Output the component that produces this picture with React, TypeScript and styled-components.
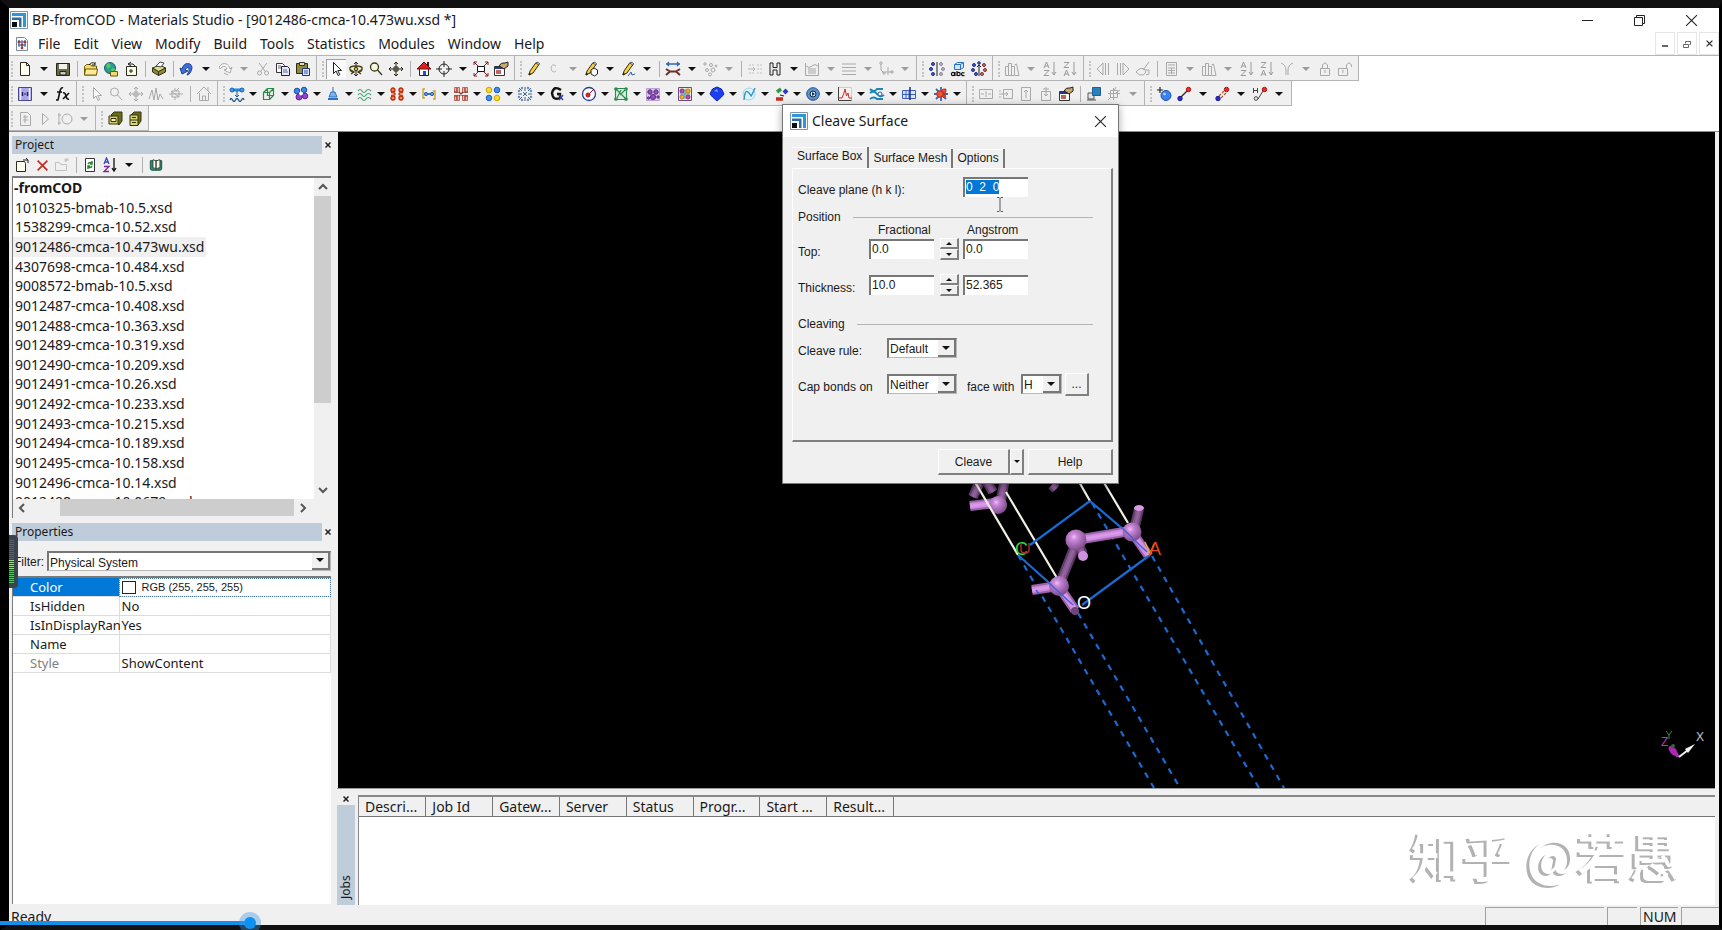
import React, { useEffect, useRef } from "react";
import styled, { createGlobalStyle, css } from "styled-components";

const uiFont = `"Noto Sans", "Open Sans", sans-serif`;
const dialogFont = `"Liberation Sans", Arial, sans-serif`;
const face = "#f0f0f0";
const caption = "#bfcddb";

const GlobalStyle = createGlobalStyle`
  * { box-sizing: border-box; }
  html, body { margin: 0; height: 100%; background: #000; }
  body { overflow: hidden; font: 14px/20px ${uiFont}; color: #1a1a1a; }
  button, input, select { font: inherit; color: inherit; margin: 0; padding: 0; border: 0; background: none; border-radius: 0; }
  ul { list-style: none; margin: 0; padding: 0; }
  svg { display: block; flex: none; }
`;

/* ---------- icons ---------- */

type Shape = [d: string, stroke?: string, fill?: string, width?: number];

const dot = (x: number, y: number, r: number) =>
  `M${x - r} ${y}a${r} ${r} 0 1 0 ${2 * r} 0a${r} ${r} 0 1 0 ${-2 * r} 0z`;

const GREY = "#a9a9a9";
const POINTER = "M5.5 1.5v11l2.600-2.500 2 4.500 1.700-.8-2-4.200h3.700z";
const LENS = dot(6.5, 6, 4) + "M9.500 9l4.500 5";
const MOVE = "M8 1v14M1 8h14M6 3l2-2 2 2M6 13l2 2 2-2M3 6l-2 2 2 2M13 6l2 2-2 2M6 6h4v4h-4z";
const PENCIL: Shape[] = [
  ["M3 14l1-4 6-8.500 3 2-6 8.500z", "#3b2c10", "#f3cf45"],
  ["M10 2l1-1 2.500 1.500-.7 1.500z", "#555", "#eee"],
  ["M3 14l.4-2 1.200 1z", "#222", "#222"],
];

const icons: Record<string, Shape[]> = {
  newDoc: [["M3.500 1.500h6l3 3v10h-9zM9.500 1.500v3h3", "#2b2b20", "#fffff2"]],
  save: [
    ["M1.500 2.500h13v12h-13z", "#25251a", "#6b6b45"],
    ["M4 3h8v5h-8z", "none", "#f2f2ee"],
    ["M5 10.500h6v3.500h-6z", "#222", "#c8c8c0"],
  ],
  openFolder: [
    ["M1.500 5.500l2-2h4l1 1.500h5v9h-12z", "#6a5a10", "#f4dc6c"],
    ["M1.500 14l1-6h12l-1 6z", "#6a5a10", "#ffec94"],
    ["M6 4q3-4 6-1M12 1v3h-3", "#222"],
  ],
  globe: [
    [dot(7, 7, 5.5), "#15606a", "#2a9c90"],
    ["M3 4l3-2 2 3-3 3zM8 8l3-1 1 2-3 2z", "none", "#56cc5c"],
    ["M7.500 10.500h7v4.500h-7z", "#6a5a10", "#f4dc6c"],
  ],
  importDoc: [
    ["M3.500 5.500h10v9h-10z", "#2b2b20", "#fbfbe2"],
    ["M5 3h5l3 3M8 1l-3 2 3 2M8 8v4M6 10h4", "#222"],
  ],
  print: [
    ["M1.500 7l7-3 6 3-7 4z", "#333310", "#dede88"],
    ["M1.500 7v4l6 3.500v-4zM14.500 7v4l-7 3.500v-4z", "#333310", "#8a8a3a"],
    ["M5 5l4-4 4 1-3 4z", "#444", "#fff"],
  ],
  undo: [["M3 8q2-7 8-5 4 3 0 9-1 2-3 2 3-4 2-7-2-2-4 2l3 1-6 3-2-6z", "#1d3f96", "#3f6fd8"]],
  redo: [["M13 8q-2-7-8-5-4 2-2 5l2-2q4-2 5 2l-3 1 6 3 2-6zM7 12l4 2", GREY, "#fafafa"]],
  cut: [["M4 2l6 8M12 2l-6 8" + dot(4.5, 12, 2) + dot(11.5, 12, 2), GREY]],
  copy: [
    ["M1.500 2.500h6l2 2v7h-8z", "#333", "#fff"],
    ["M6.500 5.500h6l2 2v7h-8z", "#223", "#e7eaff"],
    ["M8 9h4M8 11h5M3 5h3M3 7h3", "#668"],
  ],
  paste: [
    ["M1.500 2.500h11v10h-11z", "#2d2a10", "#8d8a42"],
    ["M4.500 1.500h5v3h-5z", "#333", "#e8e4a0"],
    ["M7.500 7.500h7v7h-7z", "#1e3584", "#dfe6ff"],
    ["M9 10h4M9 12h4", "#3452aa"],
  ],
  pointer: [[POINTER, "#222", "#fff"]],
  pointerOff: [[POINTER, GREY, "#fafafa"]],
  rotate: [
    ["M8 1v14M6 3l2-2 2 2M6 13l2 2 2-2", "#222"],
    ["M2 8q-1-3 6-3t6 3q0 2-3 3M2 8q0 2 3 3M3 9l3 2-3 2M13 9l-3 2 3 2", "#4a4410", "none", 1.5],
    [dot(8, 8, 1.8), "#333010", "#c9b934"],
  ],
  lens: [[LENS, "#3a3a1c", "#f7f7df", 1.3]],
  lensOff: [[LENS, GREY]],
  move: [[MOVE, "#26260f"]],
  moveOff: [[MOVE, GREY]],
  home: [
    ["M3.500 7.500h9v7h-9z", "#222", "#fff"],
    ["M1 8l7-7 7 7z", "#6d0a0a", "#e02020"],
    ["M7 10h3v4h-3z", "none", "#1f55c0"],
    ["M12 1v4", "#222", "none", 2],
  ],
  homeOff: [["M1 8l7-7 7 7M3.500 7v7.500h9V7M6.500 14v-4h3v4M12 1v4", GREY]],
  target: [[dot(8, 8, 5) + "M8 0v6M8 10v6M0 8h6M10 8h6", "#222"]],
  fit: [
    ["M1 4v-3h3M12 1h3v3M15 12v3h-3M4 15h-3v-3M1 1l4 4M15 1l-4 4M15 15l-4-4M1 15l4-4", "#7e1c1c"],
    ["M4.500 5.500h7v5h-7z", "#111", "#fff"],
  ],
  props: [
    ["M1.500 5.500h10v9h-10z", "#333", "#fff"],
    ["M2 6h9v2h-9z", "none", "#243c8e"],
    ["M3 10h5M3 12h5", "#a33", "none", 1.5],
    ["M6 5q2-4 6-3l3-1v4l-4 3-3-2z", "#222", "#c9a96a"],
  ],
  pencil: PENCIL,
  letterC: [["M10 5q-4-3-5 2 1 6 5 3", "#b5b5b5"]],
  pencilRing: [...PENCIL, ["M8 9l3-2 3.500 2v4l-3 2-3.500-2z", "#222", "#fff"]],
  pencilWave: [...PENCIL, ["M8 15l3-4 1 3 3-1", "#2a61b5"]],
  measure: [
    ["M1 3h14M4 1l-2 2 2 2M12 1l2 2-2 2", "#2867b8", "none", 1.3],
    ["M1 8l4 2.500h6l4-2.500M1 14l4-3.500M15 14l-4-3.500", "#6b3029", "none", 2],
  ],
  cluster: [["M1 3h4M3 1v4" + dot(9, 4, 1.5) + dot(5, 9, 1.5) + dot(11, 9, 2) + dot(8, 13.5, 1.5) + dot(14, 5, 1), GREY]],
  alignDots: [
    ["M1 8h7M6 6l2 2-2 2", "#b4b4b4"],
    ["M2 4h2M5 4h2M2 12h2M5 12h2M11 3v2M11 7v2M11 11v2M14 3v2M14 7v2M14 11v2", "#c2c2c2"],
  ],
  hydrogen: [["M3 2h3v4.500h4v-4.500h3v12h-3v-5h-4v5h-3z", "#222", "#e9e9e9"]],
  chartOff: [["M1.500 2v12.500h13V2M2 5q3 3 6 0t6 0M4 8h8M4 10h8M4 12h8", GREY]],
  linesOff: [["M1 3h14M1 6.500h14M1 10h14M1 13.500h14", GREY]],
  nodesOff: [["M3 3v6l3 3M10 6v8M7 11h8" + dot(3, 2, 1.2) + dot(6, 12, 1.2) + dot(14, 11, 1.2), GREY]],
  mirrorA: [
    ["M8 1v14", "#222"],
    [dot(4, 3, 1.5) + dot(2, 8, 1.5) + dot(4, 13, 1.5), "#25308a", "#4656c8"],
    [dot(12, 3, 1.5) + dot(14, 8, 1.5) + dot(12, 13, 1.5), "#8a8aa0", "#b4b4c8"],
  ],
  labelCube: [
    ["M4.500 3.500h6v5h-6zM7.500 1.500h6v5l-3 2M4.500 3.500l3-2M10.500 3.500l3-2", "#2a72bf", "#cfe5fb"],
    [dot(3, 13, 1.6) + "M5 11v4M7 10v5" + dot(8.6, 13, 1.6) + "M14.500 12q-3-1-3 1t3 1.500", "#111", "none", 1.2],
  ],
  mirrorB: [
    ["M8 4v11M6 6l2-2 2 2", "#222"],
    [dot(3, 4, 1.5) + dot(2, 9, 1.5) + dot(5, 13, 1.5) + dot(8, 2, 1.3), "#25308a", "#4656c8"],
    [dot(13, 4, 1.5) + dot(14, 9, 1.5) + dot(11, 13, 1.5), "#803030", "#c07080"],
  ],
  books: [["M1.500 5.500h3v9h-3zM4.500 2.500h3v12h-3zM7.500 5.500h3v9h-3zM10.500 4l2-1 2.500 11.500h-4", GREY]],
  sortAZ: [["M2 7l2.500-6 2.500 6M3 5h3M2 9.500h5l-5 5h5M12 1v13M10 11l2 3 2-3", "#9a9a9a"]],
  sortZA: [["M2 1.500h5l-5 5h5M2 15l2.500-6 2.500 6M3 13h3M12 1v13M10 11l2 3 2-3", "#9a9a9a"]],
  stepBack: [["M8 2l-6 6 6 6zM10.500 2v12M13.500 2v12", GREY]],
  stepNext: [["M8 2l6 6-6 6zM5.500 2v12M2.500 2v12", GREY]],
  brush: [["M14 1l-6 8M1 11q4-5 8-3 4 3-1 6-4 1-7-3zM10 9h4v4l-3 1", GREY]],
  calc: [["M3.500 1.500h10v13h-10zM5 4h7M5 7h7M5 9.500h7M5 12h7M8.500 7v6", GREY]],
  branch: [["M2 2q5 2 5 7v5M14 2q-5 2-5 7v5", GREY]],
  lock: [["M3.500 7.500h9v7h-9zM5.500 7v-3q2.500-4 5 0v3M8 9v3", GREY]],
  unlock: [["M1.500 7.500h9v7h-9zM9.500 7v-3q2.500-4 5 0v2M6 9v3", GREY]],

  film: [
    ["M1.500 1.500h13v13h-13z", "#4a4790", "#a9a4ea"],
    ["M3.500 2v12M12.500 2v12", "#f0eeff", "none", 1.5],
    ["M5.500 6v4M10.500 6v4", "#27246a", "none", 1.5],
    ["M7 8h2", "#27246a"],
  ],
  fx: [["M8 2q-2-1-3 3l-2 9-2 0M2 6h5M8 7q2-1 3 3t3 3M14 7l-6 6", "#111", "none", 1.6]],
  peaks: [["M1 13l3-9 2 10 2-12 2 12 2-6 3 5", GREY]],
  slice: [["M1 8h14M4 5h7v6h-7zM7 2v3M11 2l-3 3M7 11v3M3 5l8 6", GREY]],
  flask: [
    ["M3 4h10", "#2483d8", "none", 3],
    [dot(3, 4, 2) + dot(13, 4, 2), "#1a5fae", "#3ba0ef"],
    ["M8 5v6M6 9l2 2 2-2", "#205a86"],
    ["M1 14q1-3 2.500 0t3 0 3 0 3 0 2.500 0", "#205a86", "none", 1.3],
  ],
  greenCube: [["M2.500 6.500h6v7h-6zM6.500 2.500h6v7l-4 4M2.500 6.500l4-4M8.500 6.500l4-4M6.500 2.500v7h6", "#2b8a47", "none", 1.2]],
  blobs: [
    [dot(4, 5, 2.8) + dot(11, 4, 2.8), "#1a4fae", "#3b86e0"],
    [dot(6, 11, 3) + dot(12, 10, 2.8), "#60209a", "#9146c8"],
    [dot(8, 7.5, 1.5), "#fff", "#fff"],
  ],
  beaker: [["M8 1v5M6 6h4l2 5h-8z", "#2f6fc0", "#7db4ee"], ["M3 13h10", "#2f6fc0", "none", 2]],
  waves: [["M1 5q2-3 4 0t4 0 5 0M1 9q2-3 4 0t4 0 5 0M1 13q2-3 4 0t4 0 5 0", "#3f9f72", "none", 1.2]],
  redRings: [
    [dot(4, 4, 2) + dot(12, 4, 2) + dot(4, 12, 2) + dot(12, 12, 2), "#b52a12", "#f58a3a", 1.3],
    ["M2 6.500q4 0 4 1.500t-4 1.500M14 6.500q-4 0-4 1.500t4 1.500", "#c83a18", "none", 1.5],
  ],
  link: [
    ["M4 3h-2v9h2M12 5h2v8h-2", "#c9a22a", "none", 1.4],
    ["M4 8h8", "#3577c8", "none", 2],
    [dot(5, 8, 1.6) + dot(11, 8, 1.6), "#2356a0", "#6aa6ee"],
  ],
  redGrid: [
    ["M1.500 1.500h5v5h-5zM9.500 1.500h5v5h-5zM1.500 9.500h5v5h-5zM9.500 9.500h5v5h-5z", "#b86a5c", "#f0b8aa"],
    ["M4 2v4h-3M12 2v4h3M4 14v-4h-3M12 14v-4h3M6 6l4 4M10 6l-4 4", "#8a3226", "none", 1.2],
  ],
  fourDots: [
    [dot(4, 4, 2.8) + dot(12, 12, 2.8), "#c8a400", "#ffd92a"],
    [dot(12, 4, 2.8) + dot(4, 12, 2.8), "#1d5fc0", "#3f8ff0"],
  ],
  lattice: [
    ["M2 2l3 3M14 2l-3 3M2 14l3-3M14 14l-3-3M8 1v4M8 11v4M1 8h4M11 8h4M6 6l4 4M10 6l-4 4", "#3a5e88"],
    [dot(2, 5, 0.8) + dot(5, 2, 0.8) + dot(11, 2, 0.8) + dot(14, 5, 0.8) + dot(2, 11, 0.8) + dot(5, 14, 0.8) + dot(11, 14, 0.8) + dot(14, 11, 0.8), "#4f86bb", "#4f86bb"],
  ],
  gulp: [["M12 4q-7-5-9 3 1 8 8 5v-4h-3", "#141414", "none", 2.4], ["M10 9l4 5M14 9l-4 5", "#3c3caa", "none", 1.4]],
  orbit: [
    [dot(8, 8, 6.5), "#2a3d9c", "#fdfdff", 1.3],
    [dot(7, 9, 2), "#a51616", "#d42a2a"],
    ["M8 8l4-4", "#a51616"],
  ],
  greenNet: [["M2.500 2.500h11v11h-11zM3 3l10 10M8 4l-4 8M12 4l-5 5" + dot(3, 3, 1.3) + dot(13, 3, 1.3) + dot(3, 13, 1.3) + dot(13, 13, 1.3), "#2d8a4e", "#d8f0de", 1.1]],
  purpleMix: [
    ["M1.500 2.500h13v12h-13z", "#b9a2cc", "#dcc8ea"],
    [dot(5, 6, 2.2) + dot(11, 6, 2.2) + dot(8, 11, 2.6) + dot(3.5, 12, 1.2) + dot(13, 11, 1.2), "#5d2a88", "#8f50bb"],
  ],
  multiMix: [
    ["M1.500 1.500h13v13h-13z", "#6a4a8c", "#f2e6c4"],
    [dot(5, 5, 2) + dot(11, 11, 2), "#8a2a8a", "#b050b4"],
    [dot(11, 5, 2) + dot(5, 11, 2), "#b07a10", "#eeb53a"],
    ["M3 8h10M8 3v10", "#3f8ac0"],
  ],
  blueGem: [["M8 1l4.500 2 2.500 5-2.500 3-4.500 4-4.500-4-2.500-3 2.500-5z", "#0b1fae", "#1c40ee"], ["M5 5l3-2 1 3z", "none", "#7a9cff"]],
  cyanN: [[dot(8, 8, 6), "#9ed4e8", "#e2f5fb"], ["M3 14q1-11 4-8t3 4 4-8", "#2e93c8", "none", 1.4]],
  pills: [
    ["M4 6l4-3", "#2c9a3c", "none", 3.5],
    ["M11 7l3-3", "#2a3ac8", "none", 4],
    ["M3 13h7", "#c82a1e", "none", 3.5],
    ["M7 9l4 1", "#222", "none", 1.2],
  ],
  disc: [[dot(8, 8, 6.3), "#1f4f8c", "#5d93cf"], [dot(8, 8, 3), "#123", "#d8e8fb"], ["M7 6l3 2-3 2z", "none", "#15335c"]],
  spectrum: [
    ["M1.500 1.500h13v13h-13z", "#dcc6c6", "#f8efef"],
    ["M1.500 1v13.500h13", "#444"],
    ["M2 12h3l2-5 1-4 1.500 7 1.500-3 1 5h3", "#cf2a2a"],
  ],
  cyanWaves: [["M1 3q4 4 7 0h6M1 7q4-3 7 1t7 1M1 13q4-3 7 0h6", "#1f86b8", "none", 2], [dot(11, 8, 2), "#1f5f98", "#fff"]],
  blueTable: [["M1.500 4.500h13v8h-13zM2 8.500h12M8 4v9M5 4v9", "#3a5fc0", "#dce8ff"], ["M9 1v13", "#1b2f80", "none", 1.5]],
  burst: [
    ["M8 1v14M1 8h14M3 3l10 10M13 3l-10 10", "#3768b8", "none", 1.8],
    [dot(7, 8, 3.3) + dot(11, 5, 2) + dot(11, 10, 1.5), "#c02a1a", "#ee5436"],
  ],
  cellLeft: [["M1.500 3.500h13v9h-13zM8 5v6M10 8h3M6 8h-3", GREY]],
  cellRight: [["M5.500 3.500h9v9h-9zM1 5h2M1 8h9M1 11h2M8 6l2 2-2 2", GREY]],
  cellUp: [["M3.500 1.500h9v13h-9zM8 4v8M6 6l2-2 2 2", GREY]],
  cellDown: [["M3.500 5.500h9v9h-9zM8 1v9M6 8l2 2 2-2M5 3h6", GREY]],
  panels: [["M2 7h6v6h-6z", "#555", "#e6e6e6"], ["M6.500 1.500h8v8h-8z", "#1e5f8e", "#2a80b8"], ["M1 14h9", "#555"]],
  cropOff: [["M4.500 4.500h7v7h-7zM2 7.500h12M7.500 2v12M10 1l-2 4M14 4l-4 3M2 14l3-3", GREY]],
  addAtom: [["M1 4h6M4 1v6", "#222", "none", 1.2], [dot(10, 9.5, 5), "#1d4fb4", "#3b82ee"], [dot(8.5, 8, 1.3), "none", "#bcd8ff"]],
  bondA: [["M4 12l8-8", "#333", "none", 1.4], [dot(4, 12.5, 2.2), "#17178a", "#2a2ad0"], [dot(12.5, 3.5, 2.2), "#a01010", "#e83030"]],
  bondB: [["M5 10l2-2M8 7l2-2M7 12l2-2M10 9l2-2", "#b06030", "none", 1.2], [dot(4, 12.5, 2.2), "#17178a", "#2a2ad0"], [dot(12.5, 3.5, 2.2), "#a01010", "#e83030"]],
  bondH: [["M1.500 2v5M5.500 2v5M2 4.500h3" + dot(4, 12.5, 1.8) + "M6 13l5-8", "#444"], [dot(12.5, 3.5, 2.2), "#a01010", "#e83030"]],

  report: [["M3.500 1.500h7l3 3v10h-10zM6 6h5M6 9h5M8 4v8", GREY]],
  play: [["M5.500 2.500l6 5.500-6 5.500z", GREY]],
  cycle: [["M2 2v12M1 4h3M1 12h3" + dot(10, 8, 5), GREY]],
  serverA: [
    ["M4 4l3-3h8v9l-3 4z", "#33330a", "#6b6b22"],
    ["M2 5h9v8h-9z", "#33330a", "#cfcf70"],
    ["M4 7.500h5v3h-5z", "#33330a", "#f4f4b8"],
  ],
  serverB: [
    ["M4 4l3-3h7v9l-3 4z", "#33330a", "#6b6b22"],
    ["M3 4h8v10.500h-8zM3 9h8", "#33330a", "#d8d878"],
    ["M5 6.500h4M5 11.500h4", "#33330a"],
  ],
  addDoc: [["M2.500 4.500h8l1 2v8h-9z", "#2b2b20", "#fffff2"], ["M9 3h5v3M12 1l2 2", "#222"]],
  remove: [["M2 2l12 12M14 2l-12 12", "#c32a22", "none", 2]],
  folderOff: [["M1.500 5.500h4l1 2h6v6h-11zM12 1v4M10 3h5M14 1l-3 4", "#c0c0c0"]],
  refresh: [["M3.500 1.500h9v13h-9z", "#333", "#fff"], ["M6 7q2-3 4 0M10 4v3h-2M10 9q-2 3-4 0M6 12v-3h2", "#1f8a2a", "none", 1.5]],
  sort: [["M2 7l2.500-6 2.500 6M3 5h3", "#3345c8", "none", 1.3], ["M2 9.500h5l-5 5h5", "#7a2890", "none", 1.3], ["M12 1v13M10 11l2 3 2-3", "#111", "none", 1.3]],
  book: [
    ["M1.500 3v9q0 2 2 2h9q2 0 2-2v-9z", "#0d5040", "#2f8a68"],
    ["M4.500 2q1.500 0 3.500 2v9q-2-2-3.500-2zM12.500 2q-2 0-4.500 2v9q2-2 4.500-2z", "#333", "#fffff0"],
  ],
  docChart: [
    ["M2.500 1.500h8l3 3v10h-11z", "#7a8aa0", "#fff"],
    ["M4 6h8M4 9h8M5 4v7M8 4v9M11 4v7", "#2c58a8"],
    [dot(5, 6, 1) + dot(8, 9, 1) + dot(11, 6, 1) + dot(8, 12, 1), "#b03020", "#b03020"],
  ],
};

const Icon = ({ name, size = 16 }: { name: string; size?: number }) => (
  <svg width={size} height={size} viewBox="0 0 16 16" aria-hidden="true">
    {icons[name].map(([d, stroke = "none", fill = "none", width = 1], i) => (
      <path key={i} d={d} stroke={stroke} fill={fill} strokeWidth={width} />
    ))}
  </svg>
);

const Triangle = ({ color = "#111", width = 8 }: { color?: string; width?: number }) => (
  <svg width={width} height={width / 2} viewBox="0 0 8 4" aria-hidden="true">
    <path d="M0 0h8l-4 4z" fill={color} />
  </svg>
);

const Logo = () => (
  <svg width="18" height="18" viewBox="0 0 18 18" aria-hidden="true">
    <path d="M.5.500h17v17h-17z" fill="#fff" stroke="#8095a8" />
    <path d="M2 2h14v14h-3v-11h-11z" fill="#2f97d8" />
    <path d="M2 6.500h9.500v9.500h-2.500v-7h-7z" fill="#2c6f9c" />
    <path d="M2 11h5v5h-5z" fill="#0c0c0c" />
  </svg>
);

/* ---------- frame ---------- */

const Screen = styled.div`
  position: relative;
  height: 100vh;
  display: flex;
  flex-direction: column;
  border: solid #111;
  border-width: 8px 3px 5px 9px;
  border-left-color: #000;
  border-right-color: #000;
  background: ${face};
`;
const TitleBar = styled.header`
  display: flex;
  align-items: center;
  gap: 4px;
  height: 24px;
  padding: 0 4px 0 1px;
  background: #fff;
  flex: none;
`;
const WindowTitle = styled.h1`
  margin: 0;
  flex: 1;
  font-size: 14px;
  font-weight: 400;
  line-height: 22px;
`;
const WindowButton = styled.button`
  width: 48px;
  height: 22px;
  display: grid;
  place-items: center;
`;
const MenuBar = styled.nav`
  display: flex;
  align-items: center;
  height: 24px;
  padding-left: 5px;
  background: #fff;
  border-bottom: 1px solid #b4b4b4;
  flex: none;
`;
const MenuList = styled.div`
  display: flex;
  gap: 7px;
  margin-left: 5px;
`;
const MenuButton = styled.button`
  padding: 0 3px;
  font-size: 14px;
  line-height: 22px;
`;
const ChildButtons = styled.div`
  margin-left: auto;
  align-self: stretch;
  display: flex;
  gap: 2px;
`;
const ChildButton = styled.button`
  width: 20px;
  display: grid;
  place-items: center;
  border: 1px solid #e6e6e6;
`;

/* ---------- toolbars ---------- */

const ToolbarRow = styled.div`
  display: flex;
  height: 25px;
  background: #fff;
  flex: none;
`;
const Toolbar = styled.div`
  display: flex;
  align-items: center;
  padding: 1px 3px 0 0;
  background: ${face};
  border: solid #b4b4b4;
  border-width: 0 1px 1px 0;
  & + & { padding-left: 3px; }
`;
const Grip = styled.span`
  width: 4px;
  height: 16px;
  border-left: 2px dotted #c4c4c4;
  margin-left: 2px;
`;
const ToolButton = styled.button<{ $cell: number; $pressed?: boolean }>`
  width: ${(p) => p.$cell}px;
  height: 20px;
  display: grid;
  place-items: center;
  ${(p) =>
    p.$pressed &&
    css`
      background: #fafafa;
      box-shadow: inset 1px 1px #a0a0a0;
    `}
`;
const ArrowButton = styled.button<{ $width: number }>`
  width: ${(p) => p.$width}px;
  height: 20px;
  display: grid;
  place-items: center;
`;
const Separator = styled.span`
  width: 1px;
  height: 16px;
  margin-left: 4px;
  margin-right: 3px;
  background: #b0b0b0;
`;

type ToolbarSpec = { items: string; cell?: number; arrow?: number };

const Tools = ({ items, cell = 20, arrow = 17 }: ToolbarSpec) => (
  <Toolbar role="toolbar">
    <Grip />
    {items.split(" ").map((item, i) => {
      if (item === "|") return <Separator key={i} />;
      if (item === "v" || item === "-")
        return (
          <ArrowButton key={i} $width={arrow} aria-label="More" disabled={item === "-"}>
            <Triangle color={item === "-" ? "#9c9c9c" : "#111"} />
          </ArrowButton>
        );
      const name = item.replace("*", "");
      return (
        <ToolButton key={i} $cell={cell} $pressed={item.endsWith("*")} aria-label={name}>
          <Icon name={name} />
        </ToolButton>
      );
    })}
  </Toolbar>
);

const modules =
  "flask greenCube blobs beaker waves redRings link redGrid fourDots lattice gulp orbit greenNet purpleMix multiMix blueGem cyanN pills disc spectrum cyanWaves blueTable burst";

const toolbarRows: ToolbarSpec[][] = [
  [
    { items: "newDoc v save | openFolder globe importDoc | print | undo v redo - cut copy paste", arrow: 18 },
    { items: "pointer* rotate lens move | home target v fit props" },
    {
      items:
        "pencil letterC - pencilRing v pencilWave v | measure v cluster - | alignDots hydrogen v chartOff - linesOff - nodesOff -",
    },
    { items: "mirrorA labelCube mirrorB", cell: 21 },
    { items: "books - sortAZ sortZA", arrow: 18 },
    { items: "stepBack stepNext brush | calc - books - sortAZ sortZA branch - lock unlock", arrow: 18 },
  ],
  [
    { items: "film v fx", arrow: 18 },
    { items: "pointerOff lensOff moveOff peaks slice | homeOff" },
    { items: modules.split(" ").join(" v ") + " v", arrow: 12 },
    { items: "cellLeft cellRight cellUp cellDown props | panels cropOff -" },
    { items: "addAtom bondA v bondB v bondH v", arrow: 18 },
  ],
  [{ items: "report play cycle -" }, { items: "serverA serverB" }],
];

/* ---------- docked panels ---------- */

const Workspace = styled.div`
  flex: 1;
  min-height: 0;
  display: grid;
  grid-template-columns: 328px 1fr;
  border-top: 1px solid #8c8c8c;
`;
const Dock = styled.aside`
  display: flex;
  flex-direction: column;
  min-height: 0;
  padding: 4px 6px 2px 3px;
`;
const DockCaption = styled.div`
  display: flex;
  align-items: center;
  height: 18px;
  margin-right: -3px;
  flex: none;
`;
const DockTitle = styled.h2`
  flex: 1;
  margin: 0;
  padding-left: 3px;
  font-size: 12px;
  font-weight: 400;
  line-height: 18px;
  background: ${caption};
`;
const DockClose = styled.button`
  width: 12px;
  height: 10px;
  display: grid;
  place-items: center;
`;
const DockTools = styled.div`
  display: flex;
  align-items: center;
  height: 22px;
  flex: none;
`;
const ListBox = styled.div`
  display: grid;
  grid-template: 1fr 19px / 1fr 17px;
  height: 342px;
  flex: none;
  background: #fff;
  border: solid #7a7a7a;
  border-width: 2px 0 0 1px;
`;
const ListClip = styled.div`
  overflow: hidden;
`;
const FileList = styled.ul`
  display: grid;
  grid-auto-rows: 1fr;
  justify-items: start;
  height: 334px;
`;
const FileItem = styled.li<{ $root?: boolean; $current?: boolean }>`
  padding: 0 2px;
  font-size: 14px;
  line-height: 19px;
  white-space: nowrap;
  font-weight: ${(p) => (p.$root ? 700 : 400)};
  padding-left: ${(p) => (p.$root ? 1 : 2)}px;
  background: ${(p) => (p.$current ? "#f0f0f0" : "none")};
`;
const VScroll = styled.div`
  display: flex;
  flex-direction: column;
  background: ${face};
`;
const HScroll = styled.div`
  grid-column: 1 / 3;
  display: flex;
  background: ${face};
  padding: 0 20px 2px 0;
`;
const ScrollButton = styled.button`
  width: 17px;
  height: 18px;
  display: grid;
  place-items: center;
`;
const Thumb = styled.span<{ $start: number; $grow: number }>`
  background: #cdcdcd;
  flex: ${(p) => p.$grow};
  margin-left: ${(p) => p.$start}px;
`;
const Rest = styled.span<{ $grow: number }>`
  flex: ${(p) => p.$grow};
`;
const PropertiesCaption = styled(DockCaption)`
  margin-top: 5px;
`;
const FilterRow = styled.div`
  display: flex;
  align-items: center;
  gap: 3px;
  margin-top: 8px;
  padding-left: 2px;
  font: 12px/20px ${dialogFont};
  flex: none;
  & > label { padding-top: 3px; }
`;
const SelectFrame = styled.span<{ $width?: number }>`
  display: flex;
  height: 20px;
  background: #fff;
  border: 1px solid #b8b8b8;
  border-top: 2px solid #777;
  border-left: 2px solid #777;
  ${(p) => (p.$width ? `width: ${p.$width}px;` : "flex: 1;")}
  & > select {
    flex: 1;
    min-width: 0;
    appearance: none;
    padding-left: 1px;
    outline: 0;
  }
`;
const SelectArrow = styled.span`
  width: 18px;
  display: grid;
  place-items: center;
  background: ${face};
  border: solid #777;
  border-width: 0 2px 2px 0;
`;
const PropertyBox = styled.div`
  flex: 1;
  margin-top: 4px;
  background: #fff;
  border: solid #7a7a7a;
  border-width: 2px 0 0 1px;
`;
const PropertyTable = styled.table`
  width: 100%;
  border-collapse: collapse;
  table-layout: fixed;
  font-size: 13px;
  line-height: 18px;
`;
const PropertyName = styled.th<{ $selected?: boolean; $muted?: boolean }>`
  width: 106px;
  padding: 0 0 0 17px;
  white-space: nowrap;
  font-weight: 400;
  text-align: left;
  border: solid #dcdcdc;
  border-width: 0 1px 1px 0;
  color: ${(p) => (p.$selected ? "#fff" : p.$muted ? "#808080" : "inherit")};
  background: ${(p) => (p.$selected ? "#0078d7" : "#fff")};
`;
const PropertyValue = styled.td<{ $selected?: boolean }>`
  padding: 0 2px;
  border: solid #dcdcdc;
  border-width: 0 1px 1px 0;
  ${(p) =>
    p.$selected &&
    css`
      outline: 1px dotted #4c7a9c;
      outline-offset: -1px;
      font: 11px/18px ${dialogFont};
    `}
`;
const SwatchLine = styled.span`
  display: flex;
  align-items: center;
  gap: 6px;
  height: 18px;
`;
const Swatch = styled.span`
  width: 14px;
  height: 13px;
  border: 1px solid #222;
  background: #fff;
`;

/* ---------- viewport, jobs, status ---------- */

const MainColumn = styled.main`
  display: flex;
  flex-direction: column;
  min-width: 0;
  min-height: 0;
  padding-right: 4px;
`;
const Viewport = styled.div`
  flex: 1;
  min-height: 0;
  margin-left: 1px;
  background: #000;
  overflow: hidden;
  & > svg { width: 100%; height: 100%; }
`;
const JobsPanel = styled.section`
  display: flex;
  gap: 3px;
  height: 118px;
  padding-bottom: 1px;
  border-top: 1px solid #999;
  flex: none;
`;
const JobsSide = styled.div`
  display: flex;
  flex-direction: column;
  align-items: center;
  width: 18px;
  padding-top: 5px;
`;
const JobsTab = styled.h2`
  flex: 1;
  width: 18px;
  margin: 1px 0 0;
  padding-top: 6px;
  font-size: 12px;
  font-weight: 400;
  line-height: 18px;
  writing-mode: vertical-rl;
  transform: rotate(180deg);
  background: ${caption};
`;
const JobsBox = styled.div`
  flex: 1;
  margin-top: 6px;
  background: #fff;
  border: solid #888;
  border-width: 2px 0 0 1px;
`;
const JobsHead = styled.div`
  background: ${face};
  border-bottom: 1px solid #777;
`;
const JobsTable = styled.table`
  width: 535px;
  table-layout: fixed;
  border-collapse: collapse;
`;
const JobsColumn = styled.th`
  height: 19px;
  padding: 0 0 0 6px;
  font-size: 14px;
  font-weight: 400;
  line-height: 19px;
  text-align: left;
  white-space: nowrap;
  border-right: 1px solid #777;
`;
const StatusBar = styled.footer`
  display: flex;
  gap: 3px;
  height: 19px;
  padding: 1px 0 0 2px;
  flex: none;
  line-height: 17px;
`;
const StatusText = styled.span`
  flex: 1;
  padding-top: 1px;
`;
const StatusCell = styled.span<{ $width: number }>`
  width: ${(p) => p.$width}px;
  padding-left: 2px;
  border: solid #a0a0a0;
  border-width: 1px 0 0 1px;
`;

/* ---------- overlays ---------- */

const SeekBar = styled.div`
  position: absolute;
  left: -9px;
  right: 0;
  bottom: 0;
  height: 4px;
  display: flex;
  align-items: center;
`;
const Played = styled.span`
  width: 244px;
  height: 4px;
  background: #1590ea;
`;
const SeekKnob = styled.button`
  width: 12px;
  height: 12px;
  border-radius: 50%;
  background: #0d92f4;
  box-shadow: 0 0 0 5px rgba(60, 150, 230, 0.4);
`;
const Meter = styled.div`
  position: absolute;
  left: 0;
  top: 527px;
  width: 9px;
  height: 53px;
  padding: 5px 4px 5px 0;
  border-radius: 0 4px 4px 0;
  background: #3c434c;
  & > span {
    display: block;
    height: 43px;
    background: repeating-linear-gradient(transparent 0 1px, #3c434c 1px 2px),
      linear-gradient(#59636e 0 46%, #9fd48c 46% 70%, #4ec860 70%);
  }
`;
const Watermark = styled.p`
  position: absolute;
  right: 38px;
  bottom: 34px;
  margin: 0;
  font: 500 52px/72px "Noto Sans CJK SC", sans-serif;
  color: #fff;
  text-shadow: -3px 2px 0 #b2b2b2;
`;

/* ---------- dialog ---------- */

const Dialog = styled.section`
  position: absolute;
  left: 773px;
  top: 96px;
  width: 337px;
  border: 1px solid #777;
  background: ${face};
  box-shadow: 0 2px 8px rgba(0, 0, 0, 0.35);
  font: 12px/14px ${dialogFont};
  padding-bottom: 8px;
`;
const DialogTitleBar = styled.header`
  display: flex;
  align-items: center;
  gap: 4px;
  height: 32px;
  padding: 0 8px 0 7px;
  background: #fff;
`;
const DialogTitle = styled.h2`
  flex: 1;
  margin: 0;
  font: 400 14px/20px ${uiFont};
`;
const Tabs = styled.div`
  display: flex;
  align-items: flex-end;
  height: 31px;
  margin-left: 9px;
`;
const Tab = styled.button<{ $active?: boolean }>`
  height: ${(p) => (p.$active ? 21 : 19)}px;
  padding: ${(p) => (p.$active ? "0 5px 3px" : "0 4px 2px")};
  border: solid #777;
  border-width: 0 2px 0 0;
  box-shadow: inset 0 1px #fff;
`;
const TabPanel = styled.div`
  height: 274px;
  margin: 0 5px 0 9px;
  padding: 7px 18px 0 5px;
  border: solid #fff;
  border-width: 1px 2px 2px 1px;
  border-right-color: #808080;
  border-bottom-color: #808080;
`;
const FormRow = styled.div<{ $gap?: number }>`
  display: flex;
  align-items: center;
  height: 22px;
  margin-top: ${(p) => p.$gap ?? 0}px;
`;
const FieldLabel = styled.label<{ $width: number }>`
  width: ${(p) => p.$width}px;
  padding-top: 5px;
`;
const SectionTitle = styled.h3<{ $gap: number }>`
  display: flex;
  align-items: center;
  gap: 12px;
  margin: ${(p) => p.$gap}px 0 0;
  font-size: 12px;
  font-weight: 400;
  line-height: 14px;
  &::after {
    content: "";
    flex: 1;
    height: 1px;
    background: #b4b4b4;
  }
`;
const UnitRow = styled.div`
  display: grid;
  grid-template-columns: 71px 94px 65px;
  line-height: 12px;
  & > :first-child { grid-column: 2; padding-left: 9px; }
  & > :last-child { padding-left: 4px; }
`;
const TextField = styled.input`
  width: 65px;
  height: 20px;
  padding: 0 0 2px 1px;
  background: #fff;
  border: solid #777;
  border-width: 2px 0 0 2px;
  outline: 0;
  &::selection { background: #0078d7; color: #fff; }
`;
const Spinner = styled.span`
  display: grid;
  width: 19px;
  height: 22px;
  margin: 0 4px 0 6px;
`;
const raised = css`
  background: ${face};
  border: solid #fff;
  border-width: 1px 2px 2px 1px;
  border-right-color: #808080;
  border-bottom-color: #808080;
`;
const SpinButton = styled.button`
  ${raised}
  display: grid;
  place-items: center;
`;
const PushButton = styled.button<{ $width: number }>`
  ${raised}
  width: ${(p) => p.$width}px;
  height: 26px;
  display: grid;
  place-items: center;
`;
const MoreButton = styled(PushButton)`
  height: 23px;
  margin-left: 3px;
`;
const DialogActions = styled.footer`
  display: flex;
  justify-content: flex-end;
  margin: 7px 5px 0 0;
`;
const HelpButton = styled(PushButton)`
  margin-left: 4px;
`;
const TextCursor = styled.svg`
  position: absolute;
  left: 213px;
  top: 92px;
`;

const SelectBox = ({ id, value, width }: { id: string; value: string; width?: number }) => (
  <SelectFrame $width={width}>
    <select id={id} defaultValue={value}>
      <option>{value}</option>
    </select>
    <SelectArrow>
      <Triangle />
    </SelectArrow>
  </SelectFrame>
);

const Cross = ({ size, width = 1 }: { size: number; width?: number }) => (
  <svg width={size} height={size} viewBox="0 0 12 12" aria-hidden="true">
    <path d="M1 1l10 10M11 1l-10 10" stroke="#222" strokeWidth={width} />
  </svg>
);

const SpinPair = ({ label }: { label: string }) => (
  <Spinner>
    <SpinButton aria-label={`Increase ${label}`}>
      <svg width="6" height="3" viewBox="0 0 6 3"><path d="M0 3h6l-3-3z" fill="#111" /></svg>
    </SpinButton>
    <SpinButton aria-label={`Decrease ${label}`}>
      <Triangle width={6} />
    </SpinButton>
  </Spinner>
);

const CleaveDialog = () => {
  const plane = useRef<HTMLInputElement>(null);
  useEffect(() => {
    plane.current?.focus({ preventScroll: true });
    plane.current?.select();
  }, []);
  return (
    <Dialog role="dialog" aria-label="Cleave Surface">
      <DialogTitleBar>
        <Logo />
        <DialogTitle>Cleave Surface</DialogTitle>
        <ToolButton $cell={20} aria-label="Close">
          <Cross size={13} />
        </ToolButton>
      </DialogTitleBar>
      <Tabs role="tablist">
        <Tab role="tab" $active aria-selected>Surface Box</Tab>
        <Tab role="tab">Surface Mesh</Tab>
        <Tab role="tab">Options</Tab>
      </Tabs>
      <TabPanel role="tabpanel">
        <FormRow>
          <FieldLabel htmlFor="plane" $width={165}>Cleave plane (h k l):</FieldLabel>
          <TextField id="plane" ref={plane} defaultValue="0  2  0" />
        </FormRow>
        <SectionTitle $gap={12}>Position</SectionTitle>
        <UnitRow>
          <span>Fractional</span>
          <span>Angstrom</span>
        </UnitRow>
        <FormRow $gap={2}>
          <FieldLabel htmlFor="top" $width={71}>Top:</FieldLabel>
          <TextField id="top" defaultValue="0.0" />
          <SpinPair label="top" />
          <TextField aria-label="Top in angstrom" defaultValue="0.0" />
        </FormRow>
        <FormRow $gap={14}>
          <FieldLabel htmlFor="thickness" $width={71}>Thickness:</FieldLabel>
          <TextField id="thickness" defaultValue="10.0" />
          <SpinPair label="thickness" />
          <TextField aria-label="Thickness in angstrom" defaultValue="52.365" />
        </FormRow>
        <SectionTitle $gap={21}>Cleaving</SectionTitle>
        <FormRow $gap={6}>
          <FieldLabel htmlFor="rule" $width={89}>Cleave rule:</FieldLabel>
          <SelectBox id="rule" value="Default" width={70} />
        </FormRow>
        <FormRow $gap={14}>
          <FieldLabel htmlFor="cap" $width={89}>Cap bonds on</FieldLabel>
          <SelectBox id="cap" value="Neither" width={70} />
          <FieldLabel htmlFor="element" $width={64}>&nbsp;&nbsp; face with</FieldLabel>
          <SelectBox id="element" value="H" width={41} />
          <MoreButton $width={24}>...</MoreButton>
        </FormRow>
      </TabPanel>
      <DialogActions>
        <PushButton $width={72}>Cleave</PushButton>
        <PushButton $width={14} aria-label="Cleave options">
          <Triangle width={6} />
        </PushButton>
        <HelpButton $width={85}>Help</HelpButton>
      </DialogActions>
      <TextCursor width="8" height="15" viewBox="0 0 8 15" aria-hidden="true">
        <path d="M1 .5h2l1 1 1-1h2M4 1.500v12M1 14.500h2l1-1 1 1h2" stroke="#555" fill="none" />
      </TextCursor>
    </Dialog>
  );
};

/* ---------- molecular view ---------- */

const Rod = ({ d, dark }: { d: string; dark?: boolean }) => (
  <g fill="none">
    <path d={d} stroke={dark ? "#5c3a66" : "#9a62aa"} strokeWidth="10" />
    <path d={d} stroke={dark ? "#85588f" : "#cf8ddf"} strokeWidth="6" />
    <path d={d} stroke={dark ? "#93659e" : "#dc9cea"} strokeWidth="2" />
  </g>
);

const Structure = () => (
  <svg viewBox="338 132 1377 656" preserveAspectRatio="xMinYMin slice" aria-label="Crystal structure">
    <defs>
      <radialGradient id="atom" cx="0.4" cy="0.35" r="0.65">
        <stop offset="0" stopColor="#f0c0f8" />
        <stop offset="0.25" stopColor="#cb88da" />
        <stop offset="1" stopColor="#7d4c8a" />
      </radialGradient>
    </defs>
    <Rod dark d="M973 497l6-14M993 492l-6-10M1001 500l4-22M1052 485l4 4" />
    <Rod d="M970 506l25-3" />
    <circle cx="998" cy="505" r="9" fill="url(#atom)" />
    <g stroke="#efefe6" strokeWidth="2.200" fill="none">
      <path d="M975 482l43 73M1006 492l51 86M1078 480l12 21M1103 481l25 42" />
    </g>
    <g stroke="#1b6ad2" strokeWidth="2.200" fill="none">
      <path d="M1030 545l60-44M1090 501l62 53M1018 555l57 51M1082 605l68-50" />
      <path strokeDasharray="6 6" d="M1018 555l136 233M1078 613l102 175M1092 503l167 285M1152 556l132 232" />
    </g>
    <Rod dark d="M1077 541l-17 42" />
    <Rod d="M1076 540l54-9" />
    <Rod dark d="M1134 530l5-21" />
    <ellipse cx="1139" cy="508" rx="5" ry="3" fill="#d79ae4" />
    <Rod dark d="M1077 543l6 11" />
    <circle cx="1083" cy="556" r="5" fill="#d08fdf" />
    <circle cx="1076" cy="540" r="10.500" fill="url(#atom)" />
    <Rod d="M1132 532l16 23" />
    <circle cx="1132" cy="532" r="9.500" fill="url(#atom)" />
    <Rod d="M1032 590l26-4M1060 588l15 22" />
    <circle cx="1059" cy="586" r="10" fill="url(#atom)" />
    <circle cx="1075" cy="611" r="4" fill="#70457c" />
    <path d="M1121 527l26 25M1048 582l25 23M1036 590l3 4" stroke="#3f62d8" strokeWidth="1.500" />
    <g fontFamily="Liberation Sans, sans-serif" fontSize="18">
      <text x="1015" y="555" fill="#2fd83c">C</text>
      <path d="M1021 543v7q0 3 4 3t4-3v-7" stroke="#b02a34" strokeWidth="1.500" fill="none" />
      <text x="1077" y="609" fill="#fff">O</text>
      <path d="M1145 542l5 12 4-10" stroke="#e8b030" strokeWidth="1.500" fill="none" />
      <text x="1149" y="555" fill="#e8481c">A</text>
    </g>
    <g fontFamily="Liberation Sans, sans-serif" fontSize="12">
      <path d="M1666 731l3 4 3-4M1669 735v4" stroke="#3b8a3f" fill="none" />
      <text x="1661" y="746" fill="#b03ab8">Z</text>
      <text x="1696" y="741" fill="#c8c8c8">X</text>
    </g>
    <path d="M1678 757l-4-8" stroke="#b82ac4" strokeWidth="3" />
    <ellipse cx="1673" cy="751" rx="3" ry="6" transform="rotate(-40 1673 751)" fill="#a828b4" />
    <circle cx="1673" cy="746" r="2" fill="#2d6a30" />
    <path d="M1679 757l9-7" stroke="#eee" strokeWidth="2" />
    <path d="M1685 749l10-5-7 9z" fill="#f4f4f4" />
  </svg>
);

/* ---------- page ---------- */

const files = [
  "-fromCOD", "1010325-bmab-10.5.xsd", "1538299-cmca-10.52.xsd", "9012486-cmca-10.473wu.xsd",
  "4307698-cmca-10.484.xsd", "9008572-bmab-10.5.xsd", "9012487-cmca-10.408.xsd",
  "9012488-cmca-10.363.xsd", "9012489-cmca-10.319.xsd", "9012490-cmca-10.209.xsd",
  "9012491-cmca-10.26.xsd", "9012492-cmca-10.233.xsd", "9012493-cmca-10.215.xsd",
  "9012494-cmca-10.189.xsd", "9012495-cmca-10.158.xsd", "9012496-cmca-10.14.xsd",
  "9012498-cmca-10.0679.xsd",
];
const menus = ["File", "Edit", "View", "Modify", "Build", "Tools", "Statistics", "Modules", "Window", "Help"];
const jobColumns = ["Descri...", "Job Id", "Gatew...", "Server", "Status", "Progr...", "Start ...", "Result..."];
const properties = [["IsHidden", "No"], ["IsInDisplayRan", "Yes"], ["Name", ""], ["Style", "ShowContent"]];

const Chevron = ({ d }: { d: string }) => (
  <svg width="10" height="10" viewBox="0 0 10 10" aria-hidden="true">
    <path d={d} fill="none" stroke="#555" strokeWidth="2" />
  </svg>
);

export default function App() {
  return (
    <>
      <GlobalStyle />
      <Screen>
        <TitleBar>
          <Logo />
          <WindowTitle>BP-fromCOD - Materials Studio - [9012486-cmca-10.473wu.xsd *]</WindowTitle>
          <WindowButton aria-label="Minimize">
            <svg width="11" height="11"><path d="M0 5.500h11" stroke="#222" /></svg>
          </WindowButton>
          <WindowButton aria-label="Restore">
            <svg width="11" height="11">
              <path d="M.5 2.500h8v8h-8zM2.500 2.500v-2h8v8h-2" fill="none" stroke="#222" />
            </svg>
          </WindowButton>
          <WindowButton aria-label="Close">
            <Cross size={13} />
          </WindowButton>
        </TitleBar>
        <MenuBar>
          <Icon name="docChart" />
          <MenuList>
            {menus.map((m) => (
              <MenuButton key={m}>{m}</MenuButton>
            ))}
          </MenuList>
          <ChildButtons>
            <ChildButton aria-label="Minimize document">
              <svg width="6" height="8"><path d="M0 6h6" stroke="#666" strokeWidth="2" /></svg>
            </ChildButton>
            <ChildButton aria-label="Restore document">
              <svg width="8" height="8"><path d="M.5 4.500h5v3h-5zM2.500 3.500v-2h5v3h-1" fill="none" stroke="#666" /></svg>
            </ChildButton>
            <ChildButton aria-label="Close document">
              <Cross size={7} width={2} />
            </ChildButton>
          </ChildButtons>
        </MenuBar>
        {toolbarRows.map((row, i) => (
          <ToolbarRow key={i}>
            {row.map((bar, j) => (
              <Tools key={j} {...bar} />
            ))}
          </ToolbarRow>
        ))}
        <Workspace>
          <Dock>
            <DockCaption>
              <DockTitle>Project</DockTitle>
              <DockClose aria-label="Close project"><Cross size={6} width={3} /></DockClose>
            </DockCaption>
            <DockTools>
              <ToolButton $cell={20} aria-label="New"><Icon name="addDoc" /></ToolButton>
              <ToolButton $cell={20} aria-label="Delete"><Icon name="remove" size={13} /></ToolButton>
              <ToolButton $cell={20} aria-label="New folder"><Icon name="folderOff" /></ToolButton>
              <Separator />
              <ToolButton $cell={20} aria-label="Refresh"><Icon name="refresh" /></ToolButton>
              <ToolButton $cell={20} aria-label="Sort"><Icon name="sort" /></ToolButton>
              <ArrowButton $width={18} aria-label="Sort options"><Triangle /></ArrowButton>
              <Separator />
              <ToolButton $cell={20} aria-label="Log"><Icon name="book" size={14} /></ToolButton>
            </DockTools>
            <ListBox>
              <ListClip>
                <FileList>
                  {files.map((f, i) => (
                    <FileItem key={f} $root={i === 0} $current={i === 3}>{f}</FileItem>
                  ))}
                </FileList>
              </ListClip>
              <VScroll>
                <ScrollButton aria-label="Scroll up"><Chevron d="M1 7l4-4 4 4" /></ScrollButton>
                <Thumb $start={0} $grow={206} />
                <Rest $grow={78} />
                <ScrollButton aria-label="Scroll down"><Chevron d="M1 3l4 4 4-4" /></ScrollButton>
              </VScroll>
              <HScroll>
                <ScrollButton aria-label="Scroll left"><Chevron d="M7 1l-4 4 4 4" /></ScrollButton>
                <Thumb $start={30} $grow={1} />
                <ScrollButton aria-label="Scroll right"><Chevron d="M3 1l4 4-4 4" /></ScrollButton>
              </HScroll>
            </ListBox>
            <PropertiesCaption>
              <DockTitle>Properties</DockTitle>
              <DockClose aria-label="Close properties"><Cross size={6} width={3} /></DockClose>
            </PropertiesCaption>
            <FilterRow>
              <label htmlFor="filter">Filter:</label>
              <SelectBox id="filter" value="Physical System" />
            </FilterRow>
            <PropertyBox>
              <PropertyTable>
                <tbody>
                  <tr>
                    <PropertyName scope="row" $selected>Color</PropertyName>
                    <PropertyValue $selected>
                      <SwatchLine><Swatch />RGB (255, 255, 255)</SwatchLine>
                    </PropertyValue>
                  </tr>
                  {properties.map(([name, value]) => (
                    <tr key={name}>
                      <PropertyName scope="row" $muted={name === "Style"}>{name}</PropertyName>
                      <PropertyValue>{value}</PropertyValue>
                    </tr>
                  ))}
                </tbody>
              </PropertyTable>
            </PropertyBox>
          </Dock>
          <MainColumn>
            <Viewport>
              <Structure />
            </Viewport>
            <JobsPanel>
              <JobsSide>
                <DockClose aria-label="Close jobs"><Cross size={6} width={3} /></DockClose>
                <JobsTab>Jobs</JobsTab>
              </JobsSide>
              <JobsBox>
                <JobsHead>
                  <JobsTable>
                    <thead>
                      <tr>
                        {jobColumns.map((c) => (
                          <JobsColumn key={c} scope="col">{c}</JobsColumn>
                        ))}
                      </tr>
                    </thead>
                  </JobsTable>
                </JobsHead>
              </JobsBox>
            </JobsPanel>
          </MainColumn>
        </Workspace>
        <StatusBar>
          <StatusText>Ready</StatusText>
          <StatusCell $width={119} />
          <StatusCell $width={30} />
          <StatusCell $width={38}>NUM</StatusCell>
          <StatusCell $width={38} />
        </StatusBar>
        <Meter><span /></Meter>
        <Watermark>知乎 @若愚</Watermark>
        <SeekBar>
          <Played />
          <SeekKnob aria-label="Seek" />
        </SeekBar>
        <CleaveDialog />
      </Screen>
    </>
  );
}
